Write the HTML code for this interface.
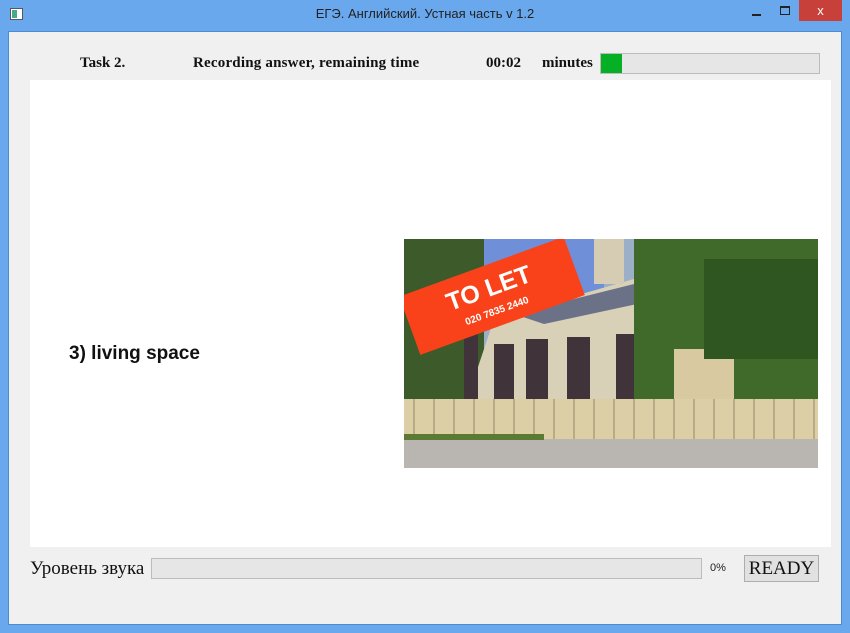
<!DOCTYPE html>
<html><head><meta charset="utf-8"><style>
*{margin:0;padding:0;box-sizing:border-box}
body{width:850px;height:633px;background:#6aa8ee;position:relative;overflow:hidden;font-family:"Liberation Serif",serif}
.abs{position:absolute}
#client{left:8px;top:31px;width:834px;height:594px;background:#f0f0f0;border:1px solid #4d8ad6}
.t{font-size:15px;font-weight:bold;color:#111;white-space:nowrap}
</style></head><body>
<div class="abs" style="left:10px;top:8px;width:13px;height:12px;background:#fff;border:1px solid #556"><div style="width:5px;height:8px;background:#4a8;margin:1px"></div></div>
<div class="abs" style="left:0;width:850px;top:6px;text-align:center;font-family:'Liberation Sans',sans-serif;font-size:13px;color:#222">ЕГЭ. Английский. Устная часть v 1.2</div>
<div class="abs" style="left:752px;top:14px;width:9px;height:2px;background:#222"></div>
<div class="abs" style="left:780px;top:6px;width:10px;height:9px;border:1px solid #222;border-top-width:2px"></div>
<div class="abs" style="left:799px;top:0;width:43px;height:21px;background:#c7403a;color:#fff;text-align:center;font:13px 'Liberation Sans',sans-serif;line-height:21px">x</div>
<div id="client" class="abs"></div>
<div class="abs t" style="left:80px;top:55px">Task 2.</div>
<div class="abs t" style="left:193px;top:55px;letter-spacing:0.2px">Recording answer, remaining time</div>
<div class="abs t" style="left:486px;top:55px">00:02</div>
<div class="abs t" style="left:542px;top:55px">minutes</div>
<div class="abs" style="left:600px;top:53px;width:220px;height:21px;background:#e6e6e6;border:1px solid #bcbcbc"><div style="width:21px;height:19px;background:#06b025"></div></div>
<div class="abs" style="left:30px;top:80px;width:801px;height:467px;background:#fff"></div>
<div class="abs" style="left:69px;top:343px;font:bold 19px 'Liberation Sans',sans-serif;color:#111">3) living space</div>
<svg class="abs" style="left:404px;top:239px" width="414" height="229" viewBox="0 0 414 229">
<rect width="414" height="229" fill="#9bb0c8"/>
<rect x="0" y="0" width="200" height="60" fill="#6f8fd8"/>
<rect x="0" y="0" width="80" height="180" fill="#3d5a2a"/>
<polygon points="90,80 230,40 300,60 300,170 60,170" fill="#d9d0b8"/>
<polygon points="110,75 230,45 280,55 140,85" fill="#6b7288"/>
<rect x="190" y="0" width="30" height="45" fill="#d6ccb4"/>
<rect x="90" y="105" width="20" height="60" fill="#40343a"/>
<rect x="122" y="100" width="22" height="66" fill="#40343a"/>
<rect x="163" y="98" width="23" height="68" fill="#40343a"/>
<rect x="212" y="95" width="28" height="72" fill="#40343a"/>
<rect x="60" y="95" width="14" height="70" fill="#40343a"/>
<rect x="230" y="0" width="184" height="180" fill="#3f6a2a"/>
<rect x="270" y="110" width="60" height="70" fill="#d8c9a0"/>
<rect x="300" y="20" width="114" height="100" fill="#2f5520"/>
<rect x="0" y="160" width="414" height="40" fill="#dccfa6"/>
<g stroke="#b9ab86" stroke-width="2"><path d="M10 160V200M30 160V200M50 160V200M70 160V200M90 160V200M110 160V200M130 160V200M150 160V200M170 160V200M190 160V200M210 160V200M230 160V200M250 160V200M270 160V200M290 160V200M310 160V200M330 160V200M350 160V200M370 160V200M390 160V200M410 160V200"/></g>
<rect x="0" y="200" width="414" height="29" fill="#b9b5b0"/>
<rect x="0" y="195" width="140" height="6" fill="#5d7a34"/>
<g transform="rotate(-20 90 55)"><rect x="0" y="25" width="175" height="62" fill="#f9421a"/>
<text x="87" y="56" text-anchor="middle" font-family="Liberation Sans,sans-serif" font-weight="bold" font-size="25" fill="#fff">TO LET</text>
<text x="87" y="75" text-anchor="middle" font-family="Liberation Sans,sans-serif" font-weight="bold" font-size="10" fill="#fff">020 7835 2440</text></g>
</svg>
<div class="abs" style="left:30px;top:558px;font-size:19px;color:#111">Уровень звука</div>
<div class="abs" style="left:151px;top:558px;width:551px;height:21px;background:#e6e6e6;border:1px solid #bcbcbc"></div>
<div class="abs" style="left:710px;top:562px;font:11px 'Liberation Sans',sans-serif;color:#222">0%</div>
<div class="abs" style="left:744px;top:555px;width:75px;height:27px;background:#e1e1e1;border:1px solid #adadad;font-size:19px;text-align:center;line-height:25px;color:#111">READY</div>
</body></html>
